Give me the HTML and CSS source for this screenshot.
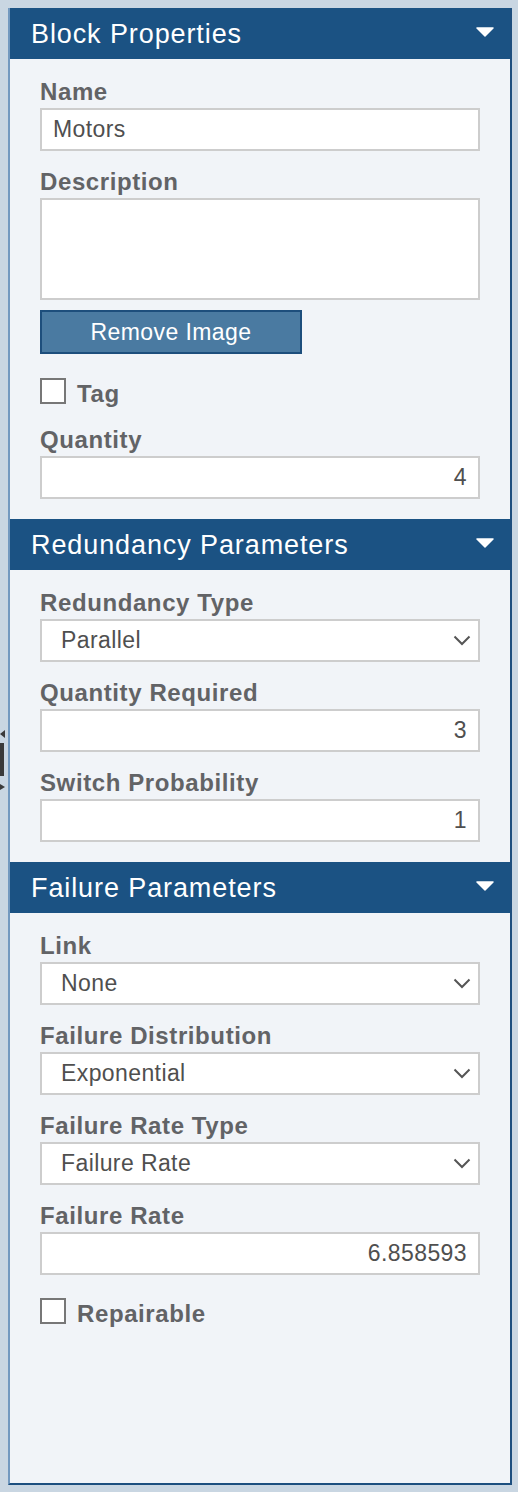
FILE: index.html
```html
<!DOCTYPE html>
<html lang="en">
<head>
<meta charset="utf-8">
<title>Block Properties</title>
<link rel="stylesheet" href="styles.css">
</head>
<body>
<svg class="edge-handle" width="6" height="64" viewBox="0 0 6 64">
  <polygon points="5,2 5,10 0,6" fill="#3a3a3a"/>
  <rect x="0" y="15" width="4" height="33" fill="#3a3a3a"/>
  <polygon points="0,56 5,59 0,62" fill="#3a3a3a"/>
</svg>
<div class="panel">
  <section class="section">
    <div class="sec-head"><span class="sec-title">Block Properties</span><svg class="caret" width="18" height="10" viewBox="0 0 18 10"><polygon points="1,1 17,1 9,9" fill="#fff" stroke="#fff" stroke-width="1.5" stroke-linejoin="round"/></svg></div>
    <div class="sec-body">
      <div class="field">
        <div class="lbl">Name</div>
        <input class="inp" type="text" value="Motors">
      </div>
      <div class="field">
        <div class="lbl">Description</div>
        <textarea class="inp area"></textarea>
      </div>
      <button class="btn" type="button">Remove Image</button>
      <div class="check"><span class="box"></span><span class="check-text">Tag</span></div>
      <div class="field after-check">
        <div class="lbl">Quantity</div>
        <input class="inp num" type="text" value="4">
      </div>
    </div>
  </section>

  <section class="section">
    <div class="sec-head"><span class="sec-title">Redundancy Parameters</span><svg class="caret" width="18" height="10" viewBox="0 0 18 10"><polygon points="1,1 17,1 9,9" fill="#fff" stroke="#fff" stroke-width="1.5" stroke-linejoin="round"/></svg></div>
    <div class="sec-body">
      <div class="field">
        <div class="lbl">Redundancy Type</div>
        <div class="inp select"><span>Parallel</span><svg class="chev" width="18" height="11" viewBox="0 0 18 11"><polyline points="1.5,1.5 9,9 16.5,1.5" fill="none" stroke="#555" stroke-width="2"/></svg></div>
      </div>
      <div class="field">
        <div class="lbl">Quantity Required</div>
        <input class="inp num" type="text" value="3">
      </div>
      <div class="field">
        <div class="lbl">Switch Probability</div>
        <input class="inp num" type="text" value="1">
      </div>
    </div>
  </section>

  <section class="section last">
    <div class="sec-head"><span class="sec-title">Failure Parameters</span><svg class="caret" width="18" height="10" viewBox="0 0 18 10"><polygon points="1,1 17,1 9,9" fill="#fff" stroke="#fff" stroke-width="1.5" stroke-linejoin="round"/></svg></div>
    <div class="sec-body">
      <div class="field">
        <div class="lbl">Link</div>
        <div class="inp select"><span>None</span><svg class="chev" width="18" height="11" viewBox="0 0 18 11"><polyline points="1.5,1.5 9,9 16.5,1.5" fill="none" stroke="#555" stroke-width="2"/></svg></div>
      </div>
      <div class="field">
        <div class="lbl">Failure Distribution</div>
        <div class="inp select"><span>Exponential</span><svg class="chev" width="18" height="11" viewBox="0 0 18 11"><polyline points="1.5,1.5 9,9 16.5,1.5" fill="none" stroke="#555" stroke-width="2"/></svg></div>
      </div>
      <div class="field">
        <div class="lbl">Failure Rate Type</div>
        <div class="inp select"><span>Failure Rate</span><svg class="chev" width="18" height="11" viewBox="0 0 18 11"><polyline points="1.5,1.5 9,9 16.5,1.5" fill="none" stroke="#555" stroke-width="2"/></svg></div>
      </div>
      <div class="field">
        <div class="lbl">Failure Rate</div>
        <input class="inp num" type="text" value="6.858593">
      </div>
      <div class="check after-input"><span class="box"></span><span class="check-text">Repairable</span></div>
    </div>
  </section>
</div>
</body>
</html>
```

FILE: styles.css
```css
html, body {
  margin: 0;
  padding: 0;
  height: 100%;
}

body {
  background: #c9d6e2;
  font-family: "Liberation Sans", Arial, Helvetica, sans-serif;
  position: relative;
  overflow: hidden;
}

.edge-handle {
  position: absolute;
  left: 0;
  top: 728px;
}

.panel {
  box-sizing: border-box;
  margin: 8px 6px 0 8px;
  height: calc(100% - 15px);
  background: #f1f4f8;
  border-left: 2px solid #7399bf;
  border-right: 2px solid #1d4f7f;
  border-bottom: 2px solid #1d4f7f;
  display: flex;
  flex-direction: column;
}

.section.last {
  flex: 1;
}

.sec-head {
  height: 51px;
  background: #1b5283;
  display: flex;
  align-items: center;
  justify-content: space-between;
  padding: 0 16px 0 21px;
}

.sec-title {
  color: #ffffff;
  font-size: 27px;
  letter-spacing: 0.9px;
  line-height: 51px;
  padding-top: 2px;
}

.caret {
  margin-top: -4px;
}

.sec-body {
  padding: 20px 30px 20px 30px;
  display: flex;
  flex-direction: column;
}

.field + .field {
  margin-top: 18px;
}

.lbl {
  font-size: 24px;
  font-weight: bold;
  letter-spacing: 0.6px;
  line-height: 26px;
  color: #626366;
  margin-bottom: 3px;
}

.inp {
  box-sizing: border-box;
  display: block;
  width: 100%;
  height: 43px;
  margin: 0;
  padding: 0 11px;
  border: 2px solid #cdcdcd;
  border-radius: 0;
  background: #ffffff;
  font-family: "Liberation Sans", Arial, Helvetica, sans-serif;
  font-size: 23px;
  letter-spacing: 0.4px;
  color: #4f4f4f;
  outline: none;
}

.inp.num {
  text-align: right;
}

.inp.area {
  height: 102px;
  resize: none;
}

.select {
  display: flex;
  align-items: center;
  justify-content: space-between;
  padding: 0 7px 0 19px;
}

.btn {
  box-sizing: border-box;
  align-self: flex-start;
  margin-top: 10px;
  width: 262px;
  height: 44px;
  background: #4a7aa1;
  border: 2px solid #1d4e7c;
  border-radius: 0;
  color: #ffffff;
  font-family: "Liberation Sans", Arial, Helvetica, sans-serif;
  font-size: 23px;
  letter-spacing: 0.4px;
  padding: 0;
}

.check {
  display: flex;
  align-items: center;
  height: 26px;
  margin-top: 24px;
}

.check.after-input {
  margin-top: 23px;
}

.box {
  box-sizing: border-box;
  width: 26px;
  height: 26px;
  border: 2px solid #777777;
  background: #ffffff;
  margin-right: 11px;
}

.check-text {
  font-size: 24px;
  font-weight: bold;
  letter-spacing: 0.6px;
  color: #626366;
  line-height: 26px;
  padding-top: 5px;
}

.field.after-check {
  margin-top: 23px;
}
```
